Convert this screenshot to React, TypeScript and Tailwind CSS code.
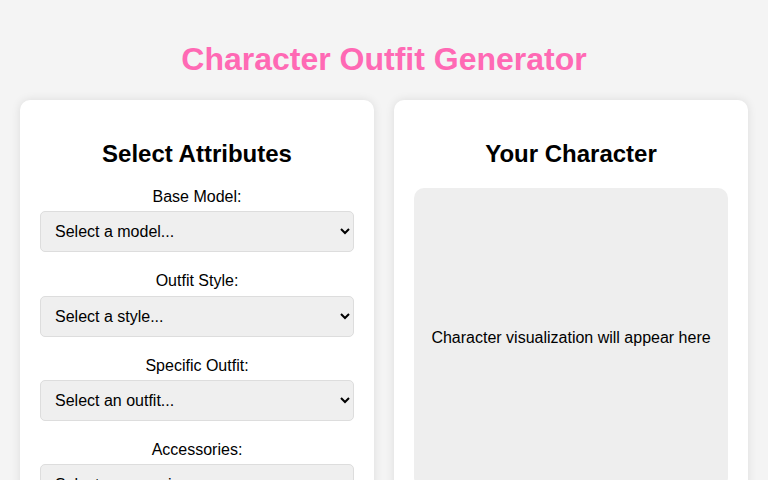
import React from "react";

const fields = [
  { label: "Base Model:", placeholder: "Select a model..." },
  { label: "Outfit Style:", placeholder: "Select a style..." },
  { label: "Specific Outfit:", placeholder: "Select an outfit..." },
  { label: "Accessories:", placeholder: "Select accessories..." },
];

export default function App() {
  return (
    <div className="min-h-screen bg-[#f4f4f4] p-5 font-['Liberation_Sans',Arial,sans-serif] text-black">
      <h1 className="mt-[21.44px] mb-[22px] text-center text-[32px] font-bold leading-[37px] text-[#ff69b4]">
        Character Outfit Generator
      </h1>
      <div className="grid grid-cols-2 gap-5">
        <div className="rounded-[10px] bg-white p-5 shadow-[0_0_10px_rgba(0,0,0,0.1)]">
          <h2 className="my-[19.92px] text-center text-2xl font-bold leading-[27.6px]">Select Attributes</h2>
          <div className="flex flex-col gap-5">
            {fields.map((f) => (
              <div key={f.label} className="flex flex-col">
                <label className="mb-[5px] text-center text-base leading-[18.4px]">{f.label}</label>
                <select className="h-[41px] w-full rounded-[5px] border border-[#dddddd] bg-[#efefef] px-[10px] text-base">
                  <option>{f.placeholder}</option>
                </select>
              </div>
            ))}
          </div>
        </div>
        <div className="rounded-[10px] bg-white p-5 shadow-[0_0_10px_rgba(0,0,0,0.1)]">
          <h2 className="my-[19.92px] text-center text-2xl font-bold leading-[27.6px]">Your Character</h2>
          <div className="flex h-[300px] items-center justify-center rounded-[10px] bg-[#eeeeee] text-base">
            Character visualization will appear here
          </div>
        </div>
      </div>
    </div>
  );
}
